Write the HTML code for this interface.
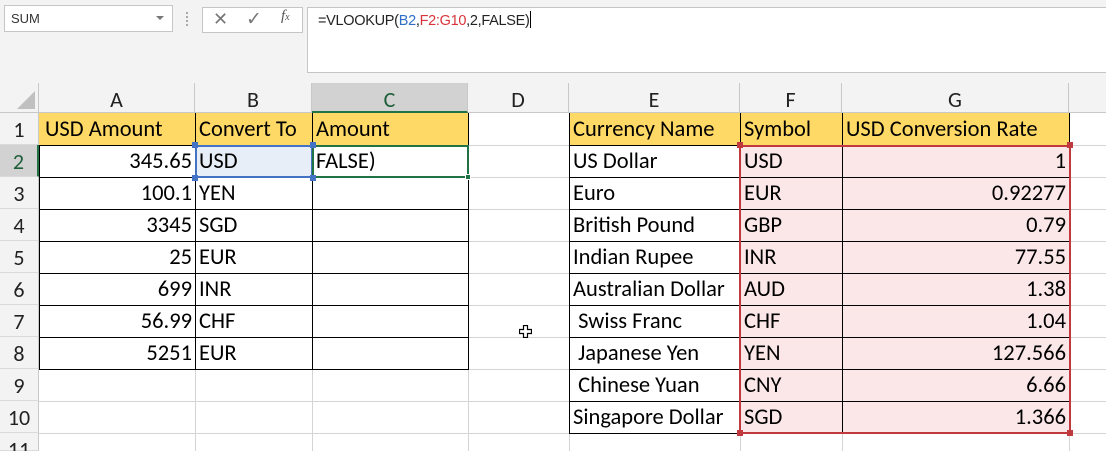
<!DOCTYPE html>
<html style="width:1106px;height:451px;overflow:hidden"><head><style>
*{margin:0;padding:0;box-sizing:border-box}
body{width:1106px;height:451px;overflow:hidden;background:#fff;font-family:Calibri,Carlito,"Liberation Sans",sans-serif;position:relative}
.a{position:absolute}
.top{left:0;top:0;width:1106px;height:83px;background:#f3f3f3}
.c{position:absolute;font-size:22.5px;line-height:34px;height:32px;padding:0 3px 0 4px;white-space:nowrap;color:#000}
.r{text-align:right}
.vl{position:absolute;top:113px;width:1px;height:338px;background:#d4d4d4}
.hl{position:absolute;left:39px;width:1067px;height:1px;background:#d4d4d4}
.ch{position:absolute;top:83px;height:30px;background:#f3f3f3;border-right:1px solid #c8c8c8;border-bottom:1px solid #c8c8c8;text-align:center;font-size:22px;line-height:33px;color:#222}
.rh{position:absolute;left:0;width:39px;height:32px;background:#f3f3f3;border-right:1px solid #c8c8c8;border-bottom:1px solid #dadada;text-align:center;font-size:22px;line-height:34px;color:#222}
</style></head><body>
<div class="a top"></div>
<div class="a" style="left:4px;top:5px;width:169px;height:27px;background:#fff;border:1px solid #c6c6c6;font-size:13px;line-height:25px;padding-left:6px;font-family:'Liberation Sans',sans-serif;color:#333">SUM<span style="position:absolute;right:8px;top:10px;border-left:4px solid transparent;border-right:4px solid transparent;border-top:4px solid #777"></span></div>
<div class="a" style="left:186px;top:12px;width:2px;height:14px;border-left:2px dotted #aaa"></div>
<div class="a" style="left:202px;top:7px;width:101px;height:26px;background:#fff;border:1px solid #c6c6c6"></div>
<div class="a" style="left:213px;top:9px;font-size:18px;color:#777;font-family:'Liberation Sans',sans-serif">✕</div>
<div class="a" style="left:246px;top:8px;font-size:19px;color:#777;font-family:'DejaVu Sans',sans-serif">✓</div>
<div class="a" style="left:281px;top:8px;font-size:15px;color:#555;font-style:italic;font-family:'Liberation Serif',serif">f<span style="font-size:10px">x</span></div>
<div class="a" style="left:307px;top:7px;width:799px;height:66px;background:#fff;border:1px solid #c6c6c6;border-right:none"></div>
<div class="a" style="left:318px;top:11px;font-size:14.5px;font-family:'Liberation Sans',sans-serif;color:#222;letter-spacing:-0.3px">=VLOOKUP(<span style="color:#2f6fc9">B2</span>,<span style="color:#d9343a">F2:G10</span>,2,FALSE)<span style="display:inline-block;width:1px;height:17px;background:#000;vertical-align:-3px"></span></div>

<div class="vl" style="left:195px"></div><div class="vl" style="left:312px"></div><div class="vl" style="left:468px"></div><div class="vl" style="left:569px"></div><div class="vl" style="left:740px"></div><div class="vl" style="left:842px"></div><div class="vl" style="left:1069px"></div>
<div class="hl" style="top:145px"></div><div class="hl" style="top:177px"></div><div class="hl" style="top:209px"></div><div class="hl" style="top:241px"></div><div class="hl" style="top:273px"></div><div class="hl" style="top:305px"></div><div class="hl" style="top:337px"></div><div class="hl" style="top:369px"></div><div class="hl" style="top:401px"></div><div class="hl" style="top:433px"></div>

<div class="ch" style="left:0;width:39px"><div class="a" style="right:3px;bottom:3px;width:0;height:0;border-left:18px solid transparent;border-bottom:18px solid #c0c0c0"></div></div>
<div class="ch" style="left:39px;width:156px">A</div>
<div class="ch" style="left:195px;width:117px">B</div>
<div class="ch" style="left:312px;width:156px;background:#d2d2d2;border-bottom:2px solid #217346;color:#1e5f3a">C</div>
<div class="ch" style="left:468px;width:101px">D</div>
<div class="ch" style="left:569px;width:171px">E</div>
<div class="ch" style="left:740px;width:102px">F</div>
<div class="ch" style="left:842px;width:227px">G</div>
<div class="ch" style="left:1069px;width:37px;border-right:none"></div>

<div class="rh" style="top:113px">1</div>
<div class="rh" style="top:145px;background:#d2d2d2;color:#1e5f3a;border-right:2px solid #217346">2</div>
<div class="rh" style="top:177px">3</div><div class="rh" style="top:209px">4</div><div class="rh" style="top:241px">5</div><div class="rh" style="top:273px">6</div><div class="rh" style="top:305px">7</div><div class="rh" style="top:337px">8</div><div class="rh" style="top:369px">9</div><div class="rh" style="top:401px">10</div><div class="rh" style="top:433px;height:18px">11</div>

<div class="a" style="left:39px;top:113px;width:430px;height:32px;background:#ffd966"></div>
<div class="a" style="left:196px;top:146px;width:116px;height:31px;background:#e8eef8"></div>
<div class="a" style="left:39px;top:145px;width:430px;height:225px;border:1px solid #000;border-top:none"></div>
<div class="a" style="left:195px;top:113px;width:1px;height:257px;background:#000"></div>
<div class="a" style="left:312px;top:113px;width:1px;height:257px;background:#000"></div>
<div class="a" style="left:468px;top:113px;width:1px;height:257px;background:#000"></div>
<div class="a" style="left:39px;top:145px;width:430px;height:1px;background:#000"></div>
<div class="a" style="left:39px;top:177px;width:430px;height:1px;background:#000"></div><div class="a" style="left:39px;top:209px;width:430px;height:1px;background:#000"></div><div class="a" style="left:39px;top:241px;width:430px;height:1px;background:#000"></div><div class="a" style="left:39px;top:273px;width:430px;height:1px;background:#000"></div><div class="a" style="left:39px;top:305px;width:430px;height:1px;background:#000"></div><div class="a" style="left:39px;top:337px;width:430px;height:1px;background:#000"></div>
<div class="a" style="left:195px;top:145px;width:118px;height:33px;border:2px solid #4472c4"></div>
<div class="a" style="left:312px;top:145px;width:157px;height:33px;border:2px solid #217346"></div>
<div class="a" style="left:192px;top:142px;width:6px;height:6px;background:#4472c4"></div><div class="a" style="left:310px;top:142px;width:6px;height:6px;background:#4472c4"></div><div class="a" style="left:192px;top:175px;width:6px;height:6px;background:#4472c4"></div><div class="a" style="left:310px;top:175px;width:6px;height:6px;background:#4472c4"></div>
<div class="a" style="left:465px;top:174px;width:6px;height:6px;background:#217346;border:1px solid #fff"></div>

<div class="c" style="left:41px;top:113px">USD Amount</div>
<div class="c" style="left:195px;top:113px">Convert To</div>
<div class="c" style="left:312px;top:113px">Amount</div>
<div class="c r" style="left:39px;width:156px;top:145px">345.65</div><div class="c" style="left:195px;top:145px">USD</div><div class="c" style="left:312px;top:145px">FALSE)</div>
<div class="c r" style="left:39px;width:156px;top:177px">100.1</div><div class="c" style="left:195px;top:177px">YEN</div>
<div class="c r" style="left:39px;width:156px;top:209px">3345</div><div class="c" style="left:195px;top:209px">SGD</div>
<div class="c r" style="left:39px;width:156px;top:241px">25</div><div class="c" style="left:195px;top:241px">EUR</div>
<div class="c r" style="left:39px;width:156px;top:273px">699</div><div class="c" style="left:195px;top:273px">INR</div>
<div class="c r" style="left:39px;width:156px;top:305px">56.99</div><div class="c" style="left:195px;top:305px">CHF</div>
<div class="c r" style="left:39px;width:156px;top:337px">5251</div><div class="c" style="left:195px;top:337px">EUR</div>

<svg class="a" style="left:519px;top:325px" width="13" height="13" viewBox="0 0 13 13"><path d="M4.5 0.5h4v4h4v4h-4v4h-4v-4h-4v-4h4z" fill="#fff" stroke="#000" stroke-width="1.2"/></svg>

<div class="a" style="left:569px;top:113px;width:501px;height:32px;background:#ffd966"></div>
<div class="a" style="left:740px;top:145px;width:330px;height:288px;background:#fbe7e8"></div>
<div class="a" style="left:569px;top:145px;width:501px;height:289px;border:1px solid #000;border-top:none"></div>
<div class="a" style="left:740px;top:113px;width:1px;height:320px;background:#000"></div>
<div class="a" style="left:842px;top:113px;width:1px;height:320px;background:#000"></div>
<div class="a" style="left:1069px;top:113px;width:1px;height:32px;background:#000"></div>
<div class="a" style="left:569px;top:113px;width:1px;height:32px;background:#000"></div>
<div class="a" style="left:569px;top:145px;width:501px;height:1px;background:#000"></div>
<div class="a" style="left:569px;top:177px;width:501px;height:1px;background:#000"></div><div class="a" style="left:569px;top:209px;width:501px;height:1px;background:#000"></div><div class="a" style="left:569px;top:241px;width:501px;height:1px;background:#000"></div><div class="a" style="left:569px;top:273px;width:501px;height:1px;background:#000"></div><div class="a" style="left:569px;top:305px;width:501px;height:1px;background:#000"></div><div class="a" style="left:569px;top:337px;width:501px;height:1px;background:#000"></div><div class="a" style="left:569px;top:369px;width:501px;height:1px;background:#000"></div><div class="a" style="left:569px;top:401px;width:501px;height:1px;background:#000"></div>
<div class="a" style="left:739px;top:145px;width:332px;height:289px;border:2px solid #c0393f"></div>
<div class="a" style="left:737px;top:142px;width:6px;height:6px;background:#c0393f"></div><div class="a" style="left:1067px;top:142px;width:6px;height:6px;background:#c0393f"></div><div class="a" style="left:737px;top:430px;width:6px;height:6px;background:#c0393f"></div><div class="a" style="left:1067px;top:430px;width:6px;height:6px;background:#c0393f"></div>

<div class="c" style="left:569px;top:113px">Currency Name</div><div class="c" style="left:740px;top:113px">Symbol</div><div class="c" style="left:842px;top:113px">USD Conversion Rate</div>
<div class="c" style="left:569px;top:145px">US Dollar</div><div class="c" style="left:740px;top:145px">USD</div><div class="c r" style="left:842px;width:227px;top:145px">1</div>
<div class="c" style="left:569px;top:177px">Euro</div><div class="c" style="left:740px;top:177px">EUR</div><div class="c r" style="left:842px;width:227px;top:177px">0.92277</div>
<div class="c" style="left:569px;top:209px">British Pound</div><div class="c" style="left:740px;top:209px">GBP</div><div class="c r" style="left:842px;width:227px;top:209px">0.79</div>
<div class="c" style="left:569px;top:241px">Indian Rupee</div><div class="c" style="left:740px;top:241px">INR</div><div class="c r" style="left:842px;width:227px;top:241px">77.55</div>
<div class="c" style="left:569px;top:273px">Australian Dollar</div><div class="c" style="left:740px;top:273px">AUD</div><div class="c r" style="left:842px;width:227px;top:273px">1.38</div>
<div class="c" style="left:569px;top:305px">&nbsp;Swiss Franc</div><div class="c" style="left:740px;top:305px">CHF</div><div class="c r" style="left:842px;width:227px;top:305px">1.04</div>
<div class="c" style="left:569px;top:337px">&nbsp;Japanese Yen</div><div class="c" style="left:740px;top:337px">YEN</div><div class="c r" style="left:842px;width:227px;top:337px">127.566</div>
<div class="c" style="left:569px;top:369px">&nbsp;Chinese Yuan</div><div class="c" style="left:740px;top:369px">CNY</div><div class="c r" style="left:842px;width:227px;top:369px">6.66</div>
<div class="c" style="left:569px;top:401px">Singapore Dollar</div><div class="c" style="left:740px;top:401px">SGD</div><div class="c r" style="left:842px;width:227px;top:401px">1.366</div>
</body></html>
